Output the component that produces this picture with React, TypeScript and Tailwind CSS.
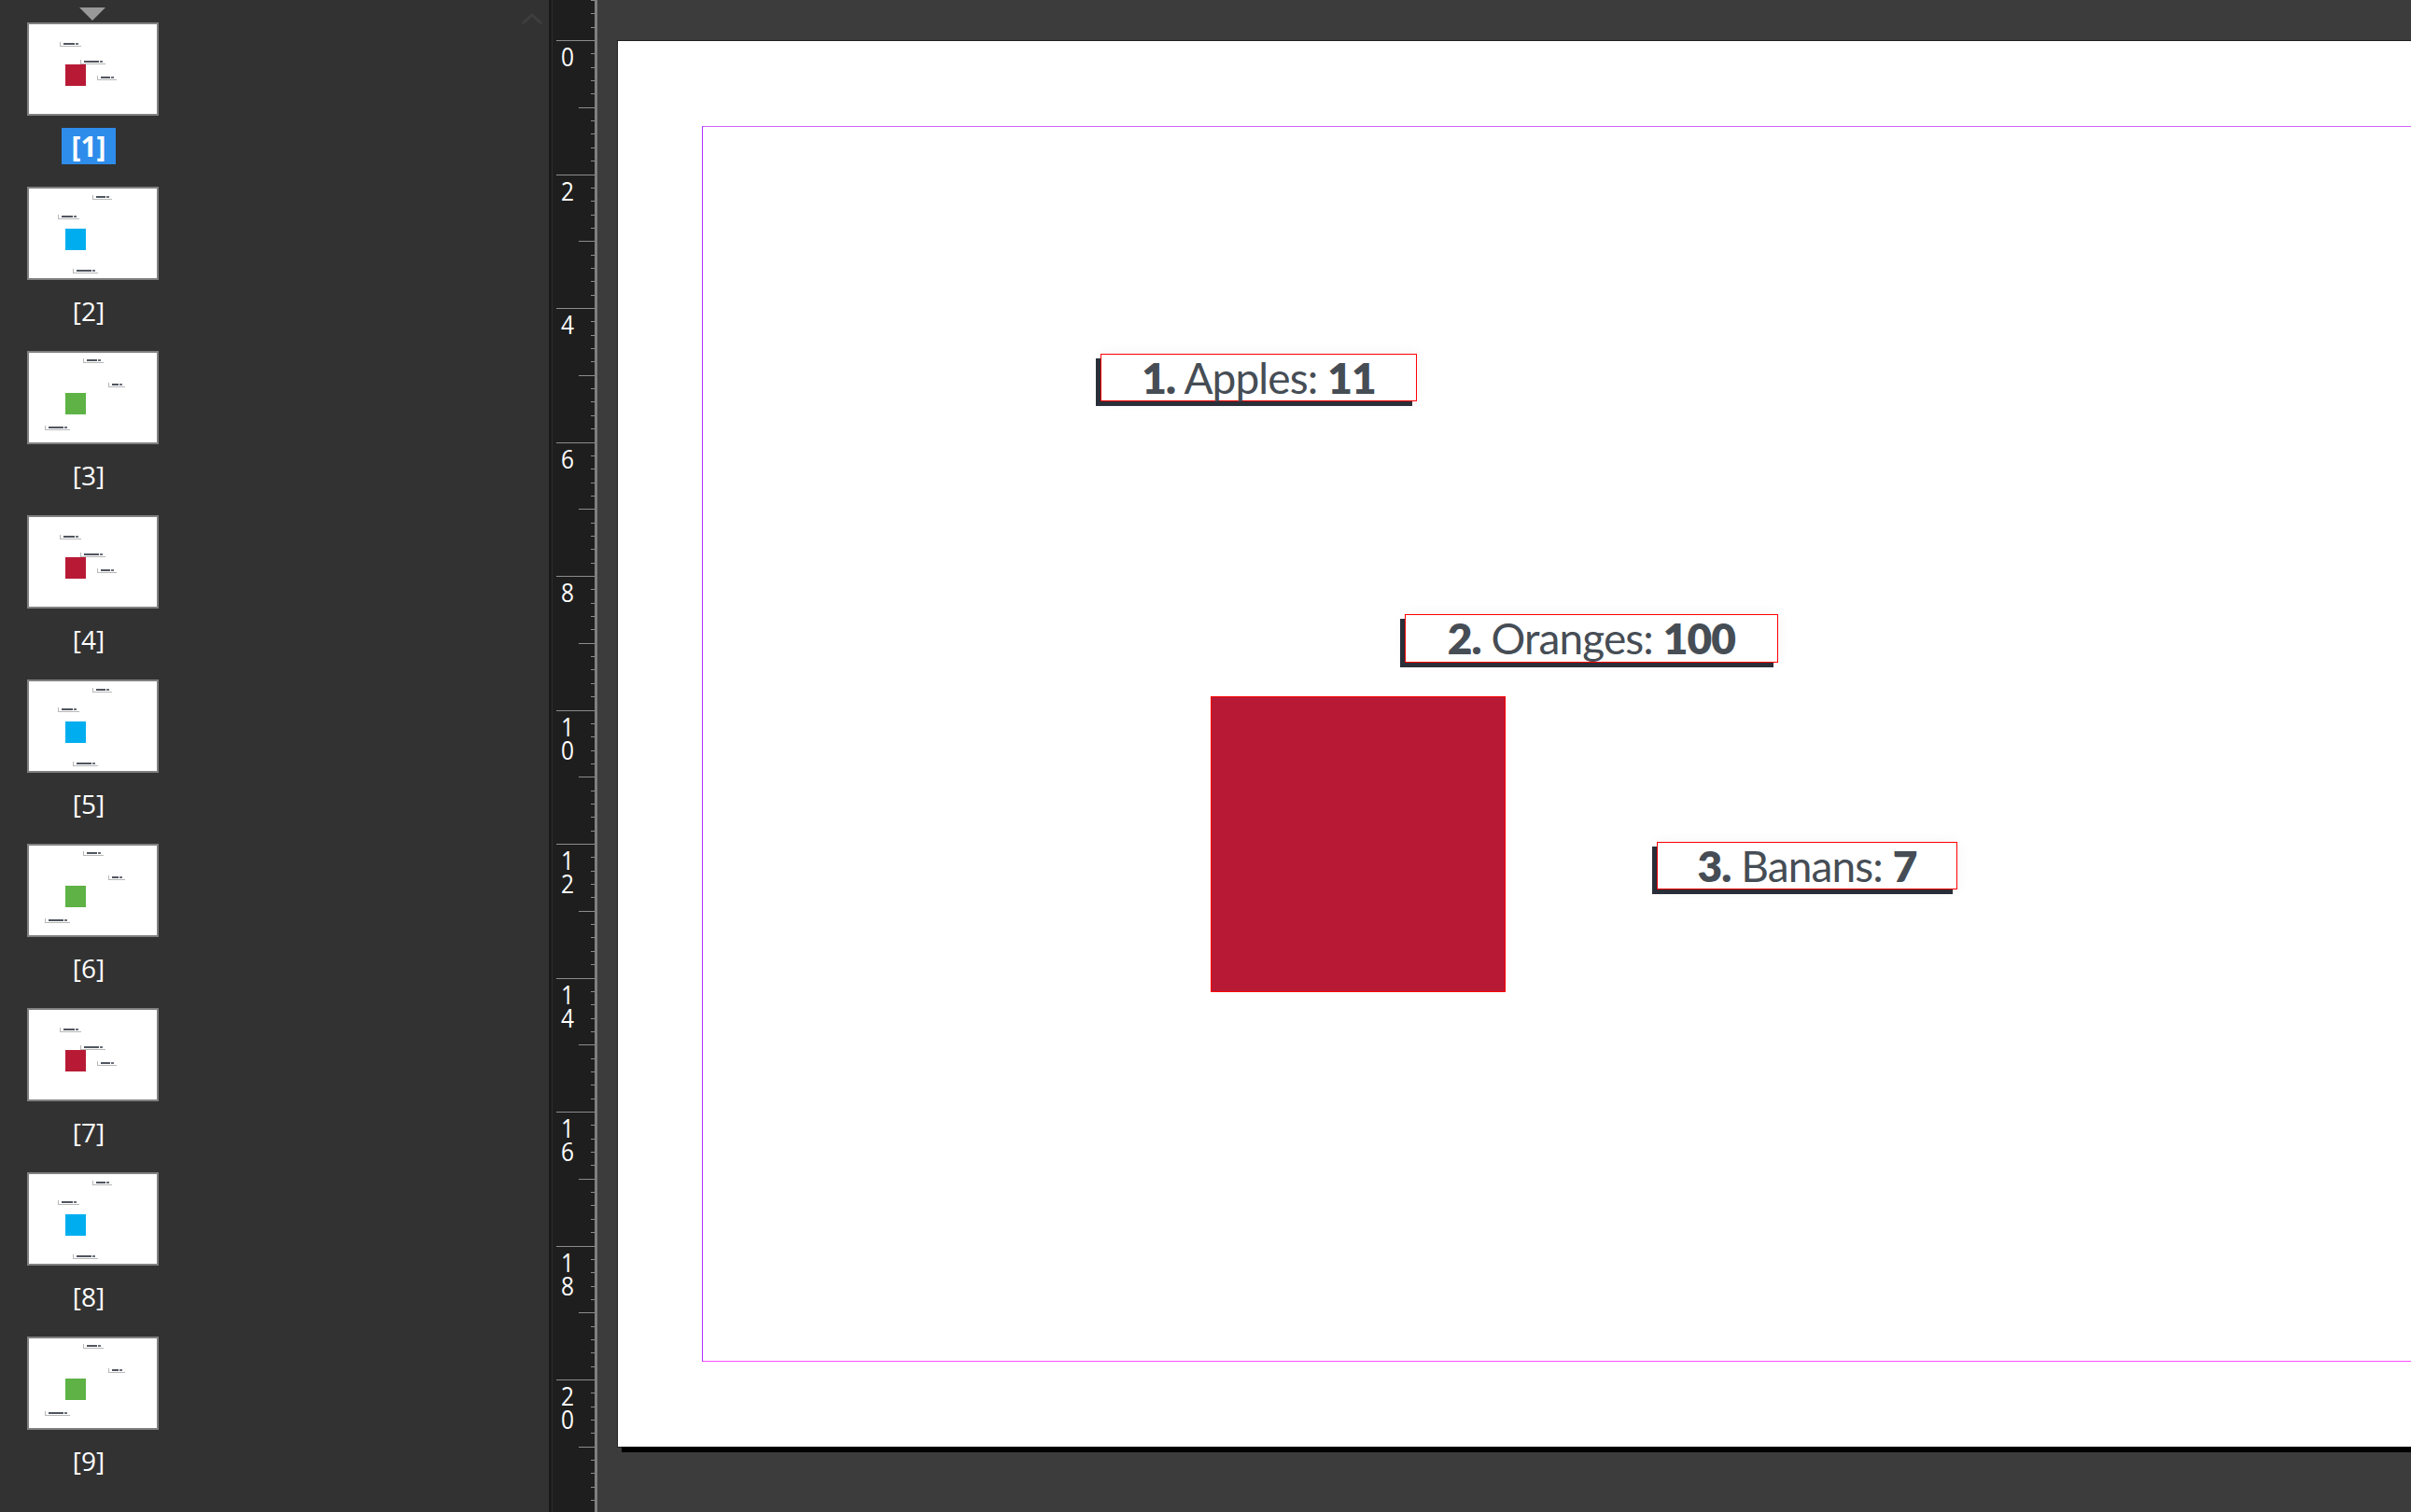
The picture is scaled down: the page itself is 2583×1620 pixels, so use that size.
const thumbVariants = [
  {
    square: 'bg-[#b81a35]',
    frames: ['left-[33px] top-[19px] w-[23px]', 'left-[55px] top-[38px] w-[27px]', 'left-[73px] top-[55px] w-[21px]'],
  },
  {
    square: 'bg-[#00aeef]',
    frames: ['left-[68px] top-[7px] w-[21px]', 'left-[31px] top-[28px] w-[23px]', 'left-[47px] top-[86px] w-[27px]'],
  },
  {
    square: 'bg-[#5eb246]',
    frames: ['left-[58px] top-[6px] w-[22px]', 'left-[85px] top-[32px] w-[18px]', 'left-[17px] top-[78px] w-[27px]'],
  },
]

const pages = [1, 2, 3, 4, 5, 6, 7, 8, 9]

function Thumb({ page }: { page: number }) {
  const variant = thumbVariants[(page - 1) % 3]
  const selected = page === 1

  return (
    <div className="h-[176px] shrink-0">
      <div className="relative h-[100px] w-[141px] border-2 border-[#808080] bg-white">
        {variant.frames.map((frame) => (
          <div key={frame} className={`absolute flex h-[5px] gap-[1px] border-b border-l border-[#b8b8b8] px-[3px] pt-[1px] ${frame}`}>
            <div className="h-[2px] flex-1 bg-[#50565f]" />
            <div className="h-[2px] w-[3px] bg-[#6a7078]" />
          </div>
        ))}
        <div className={`absolute left-[39px] top-[43px] h-[23px] w-[22px] ${variant.square}`} />
      </div>
      <div className="mt-[13px] flex h-[39px] w-[132px] justify-center">
        <span
          className={`flex h-[39px] w-[58px] items-center justify-center pt-[1px] leading-none text-white ${
            selected ? 'bg-[#2e8ceb] text-[30px] font-bold' : 'text-[28px]'
          }`}
        >
          [{page}]
        </span>
      </div>
    </div>
  )
}

function Ruler() {
  const ticks = Array.from({ length: 113 }, (_, i) => i - 3)

  return (
    <svg width="52" height="1620" className="block shrink-0" style={{ fontFamily: '"Open Sans", sans-serif' }}>
      <rect x="0" y="0" width="52" height="1620" fill="#1e1e1e" />
      <rect x="0" y="0" width="3" height="1620" fill="#1a1a1a" />
      <rect x="3" y="0" width="1" height="1620" fill="#2c2c2c" />
      <rect x="49" y="0" width="3" height="1620" fill="#7f7f7f" />
      {ticks.map((i) => {
        const y = Math.round(43 + i * 14.35)
        const major = i % 10 === 0
        const medium = i % 5 === 0
        const x = major ? 8 : medium ? 32 : 45
        return <rect key={i} x={x} y={y} width={49 - x} height="1" fill="#8c8c8c" />
      })}
      {[0, 2, 4, 6, 8, 10, 12, 14, 16, 18, 20].map((n) => {
        const y = 71 + n * 71.75
        return String(n)
          .split('')
          .map((digit, idx) => (
            <text
              key={`${n}-${idx}`}
              x="13"
              y={y + idx * 25}
              fill="#ffffff"
              fontSize="28"
              textLength="14"
              lengthAdjust="spacingAndGlyphs"
            >
              {digit}
            </text>
          ))
      })}
    </svg>
  )
}

function TextFrame({ className, num, name, value }: { className: string; num: string; name: string; value: string }) {
  return (
    <div
      className={`absolute flex items-center justify-center whitespace-pre border border-[#ff0000] bg-white font-['Lato',sans-serif] text-[46px] font-normal leading-none tracking-[-0.9px] text-[#464d55] shadow-[-5px_5px_0_#2a2e38,0_0_14px_rgba(0,0,0,0.05)] ${className}`}
    >
      <span>
        <b className="font-extrabold">{num}</b> {name}: <b className="font-extrabold">{value}</b>
      </span>
    </div>
  )
}

export default function App() {
  return (
    <div className="flex h-[1620px] w-[2583px] overflow-hidden bg-[#3c3c3c] font-['Open_Sans',sans-serif]">
      {/* Pages panel */}
      <div className="relative w-[588px] shrink-0 overflow-hidden bg-[#323232] pl-[29px] pt-[8px]">
        <svg width="28" height="14" className="ml-[56px] block">
          <path d="M0 0H28L14 14Z" fill="#999999" />
        </svg>
        <svg width="22" height="12" className="absolute left-[559px] top-[14px]" fill="none">
          <path d="M1 11L11 2L21 11" stroke="#3e3e3e" strokeWidth="3" />
        </svg>
        <div className="mt-[2px] flex flex-col">
          {pages.map((page) => (
            <Thumb key={page} page={page} />
          ))}
        </div>
      </div>

      <Ruler />

      {/* Canvas */}
      <div className="flex-1 overflow-hidden pl-[22px] pt-[44px]">
        <div className="relative h-[1506px] bg-white shadow-[4px_6px_0_#000,0_0_0_1px_#222222]">
          <div className="absolute left-[90px] top-[91px] h-[1324px] w-[2000px] border border-[#ff4dff] border-l-[#b030ff] border-t-[#d060ff]" />
          <TextFrame className="left-[517px] top-[335px] h-[51px] w-[339px]" num="1." name="Apples" value="11" />
          <TextFrame className="left-[843px] top-[614px] h-[52px] w-[400px]" num="2." name="Oranges" value="100" />
          <TextFrame className="left-[1113px] top-[858px] h-[51px] w-[322px]" num="3." name="Banans" value="7" />
          <div className="absolute left-[635px] top-[702px] h-[317px] w-[316px] border border-[#ff0000] bg-[#b81a35]" />
        </div>
      </div>
    </div>
  )
}
